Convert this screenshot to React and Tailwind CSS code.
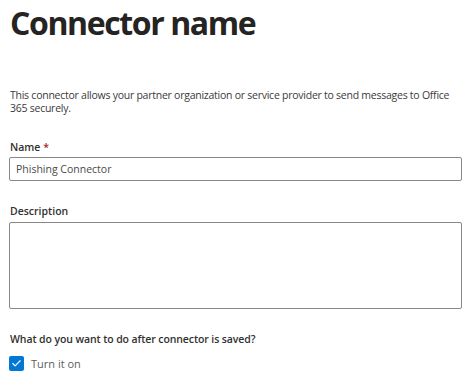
import { Check } from 'lucide-react';

const font = { fontFamily: '"Segoe UI", "Open Sans", "Noto Sans", sans-serif' };

export default function App() {
  return (
    <div className="w-[474px] h-[386px] bg-white overflow-hidden" style={font}>
      <div className="pl-[9px] pr-[12px] pt-[3px] flex flex-col text-[#323130]">
        {/* Title */}
        <h1 className="text-[32px] leading-[40px] font-bold tracking-[-1.4px] text-[#252423] pl-[1px]">Connector name</h1>

        <p className="mt-[46px] text-[10.5px] leading-[13px] tracking-[-0.25px] pl-[1px] text-[#3b3a39]">
          This connector allows your partner organization or service provider to send messages to Office 365 securely.
        </p>

        {/* Name */}
        <label className="mt-[25px] text-[10.5px] leading-[14px] font-semibold pl-[1px]">
          Name <span className="text-[#a4262c]">*</span>
        </label>
        <div className="mt-[3px] h-[24px] border border-[#8a8886] rounded-[2px] flex items-center px-[6px] text-[10.5px] leading-[14px] text-[#4b4a48]">
          Phishing Connector
        </div>

        {/* Description */}
        <label className="mt-[23px] text-[10.5px] leading-[14px] font-semibold pl-[1px]">Description</label>
        <div className="mt-[4px] h-[87px] border border-[#8a8886] rounded-[2px]" />

        {/* After save */}
        <div className="mt-[23px] text-[10.5px] leading-[14px] font-semibold tracking-[-0.1px] pl-[1px]">
          What do you want to do after connector is saved?
        </div>
        <div className="mt-[10px] flex items-center gap-[7px]">
          <div className="w-[15px] h-[15px] rounded-[2px] bg-[#0078d4] flex items-center justify-center">
            <Check className="w-[11px] h-[11px] text-white" strokeWidth={2.5} />
          </div>
          <span className="text-[11px] leading-[14px] text-[#605e5c]">Turn it on</span>
        </div>
      </div>
    </div>
  );
}
